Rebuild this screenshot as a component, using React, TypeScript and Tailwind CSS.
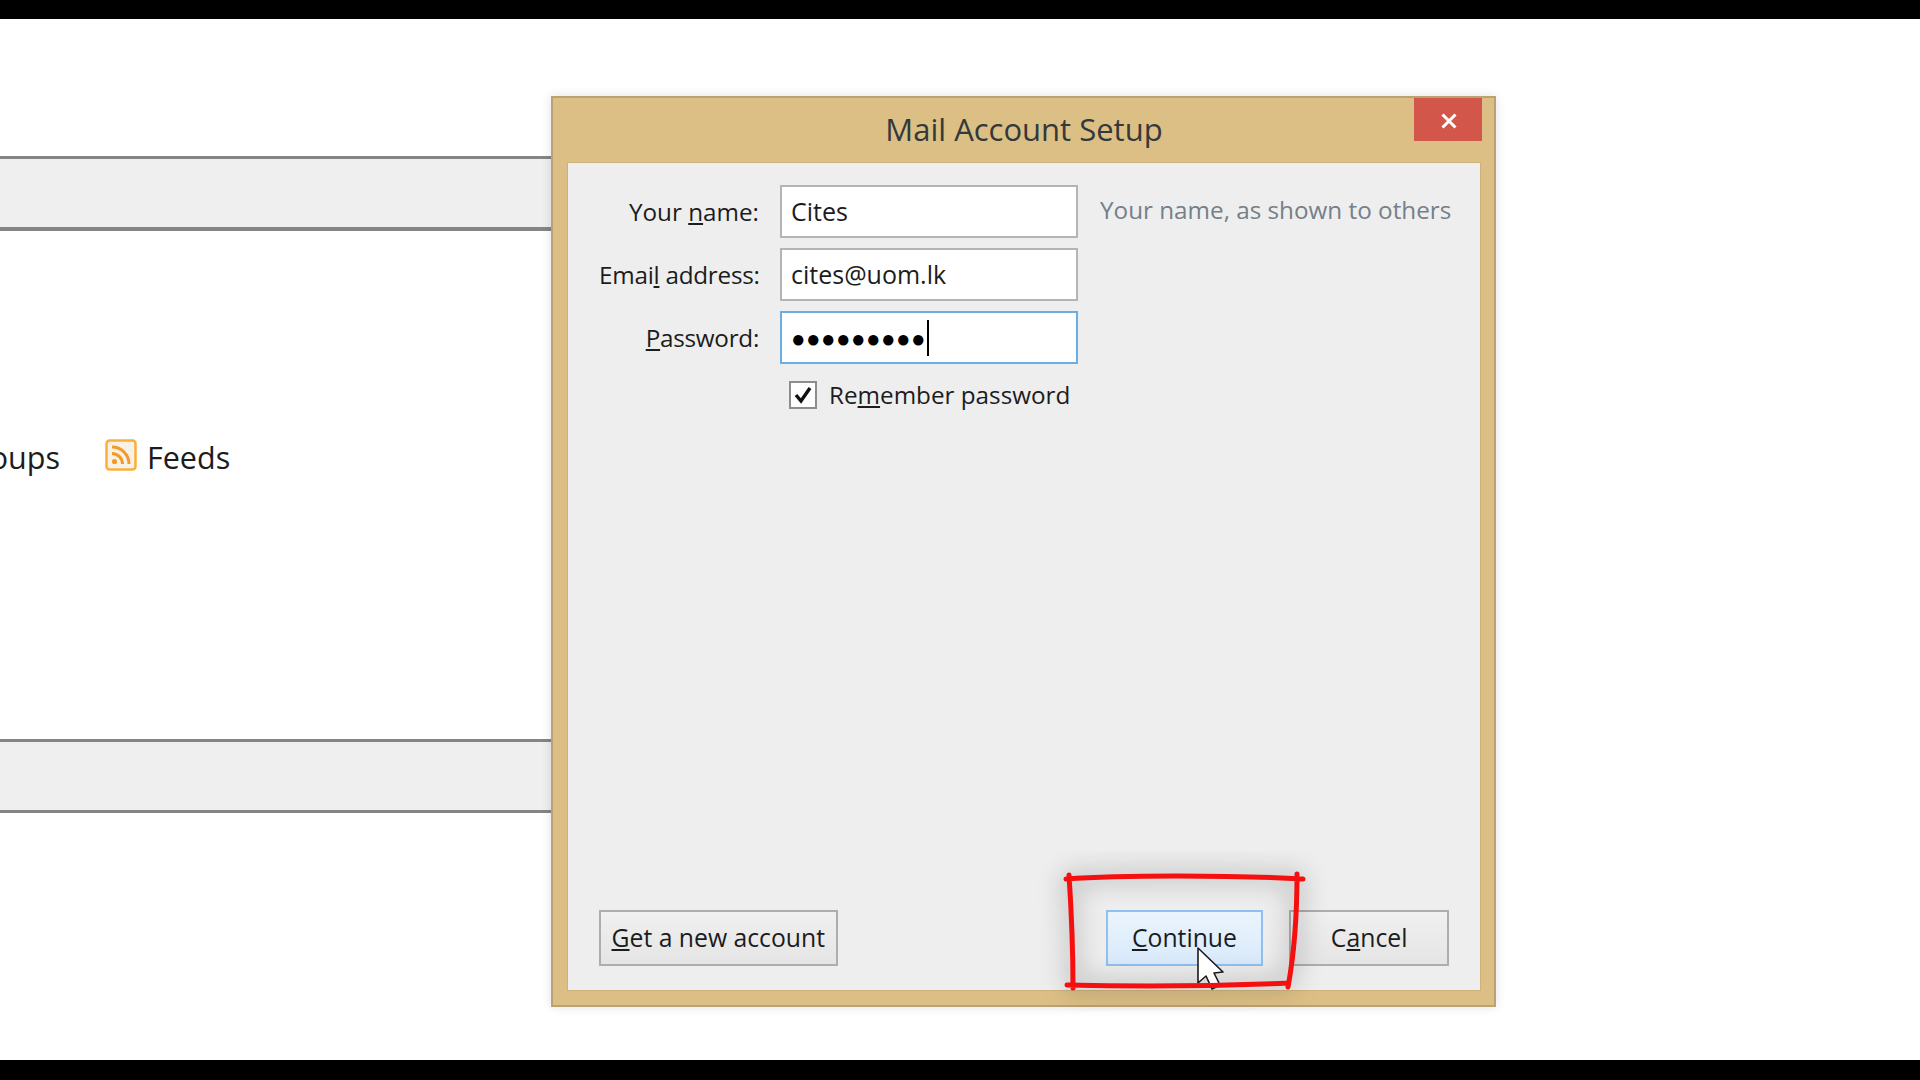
import React from 'react';

const uiFont = { fontFamily: '"Open Sans", "Noto Sans", sans-serif' };

function Field({ label, children, focused }: { label: React.ReactNode; children: React.ReactNode; focused?: boolean }) {
  return (
    <div className="flex items-center h-[53px]">
      <div className="w-[160px] pt-[2px] text-right text-[24.25px] text-[#1c1c1c] whitespace-nowrap">{label}</div>
      <div
        className={`w-[298px] h-[53px] ml-[21px] bg-white border-2 flex items-center pl-[9px] text-[25px] text-[#1c1c1c] ${
          focused ? 'border-[#66afe9]' : 'border-[#b4b4b4]'
        }`}
      >
        {children}
      </div>
    </div>
  );
}

function Btn({ children, className = '' }: { children: React.ReactNode; className?: string }) {
  return (
    <div className={`h-[56px] flex items-center justify-center border-2 text-[24.75px] text-[#1c1c1c] ${className}`}>
      {children}
    </div>
  );
}

function Background() {
  return (
    <div className="w-[551px] h-full flex flex-col overflow-hidden">
      <div className="h-[137px]" />
      <div className="h-[75px] bg-[#efefef] border-t-[3px] border-b-[4px] border-[#858585]" />
      <div className="h-[192px]" />
      <div className="h-[70px] flex items-center text-[30.5px] text-[#1c1c1c]" style={uiFont}>
        <span className="w-[60px] overflow-hidden whitespace-nowrap flex justify-end">oups</span>
        <svg className="ml-[45px] mr-[10px] mb-[7px]" width="32" height="32" viewBox="0 0 32 32">
          <rect x="1.5" y="1.5" width="29" height="29" rx="3" fill="#f8f1e6" stroke="#fbae3c" strokeWidth="2.5" />
          <circle cx="9.5" cy="22.5" r="2.6" fill="#f39a2b" />
          <path d="M7 14.5a10.5 10.5 0 0 1 10.5 10.5" fill="none" stroke="#f39a2b" strokeWidth="3" />
          <path d="M7 8a17 17 0 0 1 17 17" fill="none" stroke="#f39a2b" strokeWidth="3" />
        </svg>
        <span>Feeds</span>
      </div>
      <div className="h-[246px]" />
      <div className="h-[74px] bg-[#efefef] border-t-[3px] border-b-[3px] border-[#858585]" />
    </div>
  );
}

function Annotation() {
  const rough =
    'M1066 879C1120 875 1230 875 1303 879M1297 874C1297 920 1293 960 1288 987M1067 985C1140 987 1220 986 1288 983M1069 875C1072 920 1073 955 1073 988';
  return (
    <svg className="absolute left-0 top-0 pointer-events-none" width="1920" height="1080" viewBox="0 0 1920 1080">
      <defs>
        <filter id="glow" x="-20%" y="-20%" width="140%" height="140%">
          <feGaussianBlur stdDeviation="12" />
        </filter>
      </defs>
      <path d={rough} fill="none" stroke="#000" strokeOpacity="0.2" strokeWidth="14" filter="url(#glow)" />
      <path
        d="M1198 948V983L1206 976L1212 989L1220 985L1214 973L1223 972Z"
        fill="#fff"
        stroke="#1a1a1a"
        strokeWidth="1.6"
        strokeLinejoin="round"
      />
      <path d={rough} fill="none" stroke="#f50f0f" strokeWidth="5" strokeLinecap="round" />
    </svg>
  );
}

export default function App() {
  return (
    <div className="relative w-[1920px] h-[1080px] bg-white flex flex-col overflow-hidden" style={uiFont}>
      <div className="h-[19px] bg-black" />
      <div className="flex-1">
        <Background />
      </div>
      <div className="h-[20px] bg-black" />

      {/* dialog window */}
      <div className="absolute left-[551px] top-[96px] w-[945px] h-[911px] bg-[#dcbf85] border-2 border-[#b9a273] shadow-[0_0_10px_rgba(0,0,0,0.12)] flex flex-col pl-[14px] pr-[13px] pb-[14px]">
        <div className="relative h-[64px] shrink-0 flex items-center justify-center text-[31px] text-[#33393b]">
          <span className="mb-[1px]">Mail Account Setup</span>
          <div className="absolute right-[-1px] top-0 w-[68px] h-[43px] bg-[#d2574a] flex items-center justify-center">
            <svg className="mt-[2px] ml-[2px]" width="18" height="18" viewBox="0 0 18 18">
              <path d="M2.5 2.5L15.5 15.5M15.5 2.5L2.5 15.5" stroke="#fff" strokeWidth="3" />
            </svg>
          </div>
        </div>
        <div className="flex-1 bg-[#eeeeee] border border-[#cdb27c] flex flex-col pt-[22px] px-[31px] pb-[24px]">
          <div className="flex flex-col gap-[10px]">
            <div className="flex">
              <Field label={<>Your <u>n</u>ame:</>}>Cites</Field>
              <div className="ml-[22px] h-[53px] flex items-center pb-[2px] text-[24.25px] text-[#74808a] whitespace-nowrap">
                Your name, as shown to others
              </div>
            </div>
            <Field label={<span className="tracking-[-0.25px]">Emai<u>l</u> address:</span>}>cites@uom.lk</Field>
            <Field focused label={<span className="tracking-[-0.27px]"><u>P</u>assword:</span>}>
              <span className="text-[24px] tracking-[0.5px] text-black leading-none">●●●●●●●●●</span>
              <span className="w-[2px] h-[36px] bg-black ml-[1px]" />
            </Field>
          </div>
          <div className="flex items-center ml-[190px] mt-[13px]">
            <div className="w-[28px] h-[28px] bg-white border-2 border-[#8d8d8d] flex items-center justify-center">
              <svg width="20" height="18" viewBox="0 0 20 18">
                <path d="M3 9L8 15L17 2" fill="none" stroke="#111" strokeWidth="3.4" />
              </svg>
            </div>
            <span className="ml-[12px] text-[24.25px] text-[#1c1c1c] whitespace-nowrap">
              Re<u>m</u>ember password
            </span>
          </div>
          <div className="mt-auto flex">
            <Btn className="w-[239px] border-[#adadad] bg-gradient-to-b from-[#f0f0f0] to-[#e5e5e5]">
              <span><u>G</u>et a new account</span>
            </Btn>
            <Btn className="w-[158px] ml-[268px] border-[#8fc0f0] bg-gradient-to-b from-[#eaf4fd] to-[#d9eafb]">
              <span><u>C</u>ontinue</span>
            </Btn>
            <Btn className="w-[160px] ml-[26px] border-[#adadad] bg-gradient-to-b from-[#f0f0f0] to-[#e5e5e5]">
              <span>C<u>a</u>ncel</span>
            </Btn>
          </div>
        </div>
      </div>

      <Annotation />
    </div>
  );
}
